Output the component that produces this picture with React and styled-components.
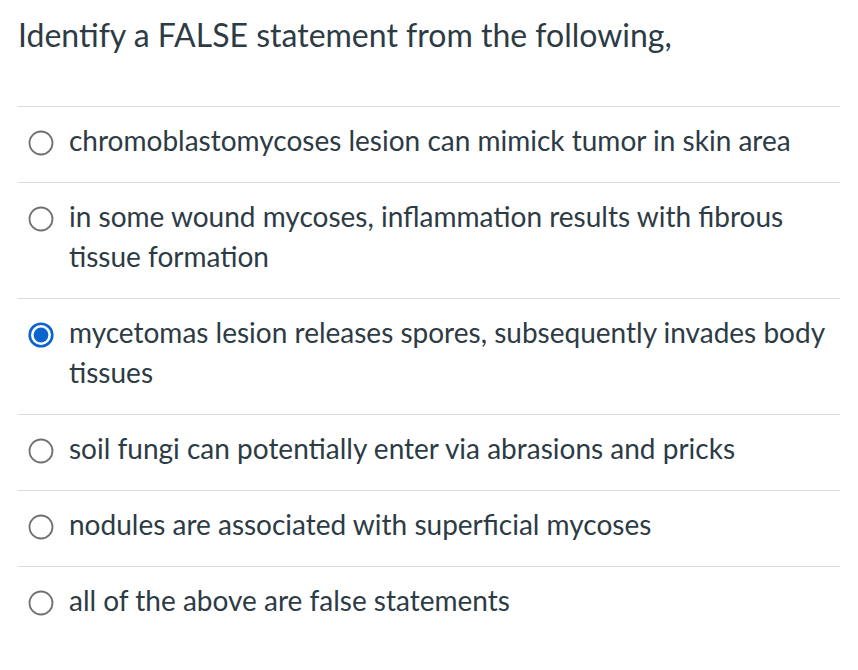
import React from 'react';
import styled, { createGlobalStyle } from 'styled-components';

const Global = createGlobalStyle`
  body {
    margin: 0;
    background: #fff;
    font-family: Lato, "Noto Sans", sans-serif;
    color: #2d3b45;
  }
`;

const Page = styled.div`
  padding: 10px 18px 0 18px;
  width: 822px;
`;

const Question = styled.h1`
  margin: 0;
  font-size: 32px;
  font-weight: 400;
  line-height: 50px;
  padding-bottom: 46px;
`;

const List = styled.div`
  display: flex;
  flex-direction: column;
`;

const Row = styled.label`
  display: flex;
  align-items: flex-start;
  border-top: 1px solid #dcdcdc;
  padding: 13px 0 22px 0;
`;

const RadioWrap = styled.span`
  flex: 0 0 auto;
  box-sizing: border-box;
  width: 51px;
  height: 40px;
  padding: 10px 0 0 10px;
  display: flex;
  align-items: flex-start;
`;

const Text = styled.span`
  font-size: 28px;
  line-height: 40px;
`;

const Radio = ({ checked }) => (
  <RadioWrap>
    <svg width="26" height="26" viewBox="0 0 26 26">
      {checked ? (
        <>
          <circle cx="13" cy="13" r="11.3" fill="#fff" stroke="#0b63ce" strokeWidth="2.6" />
          <circle cx="13" cy="13" r="7.4" fill="#0b63ce" />
        </>
      ) : (
        <circle cx="13" cy="13" r="11.5" fill="#fff" stroke="#707070" strokeWidth="1.8" />
      )}
    </svg>
  </RadioWrap>
);

const options = [
  { text: 'chromoblastomycoses lesion can mimick tumor in skin area' },
  { text: 'in some wound mycoses, inflammation results with fibrous tissue formation' },
  { text: 'mycetomas lesion releases spores, subsequently invades body tissues', checked: true },
  { text: 'soil fungi can potentially enter via abrasions and pricks' },
  { text: 'nodules are associated with superficial mycoses' },
  { text: 'all of the above are false statements' },
];

export default function App() {
  return (
    <Page>
      <Global />
      <Question>Identify a FALSE statement from the following,</Question>
      <List>
        {options.map(o => (
          <Row key={o.text}>
            <Radio checked={o.checked} />
            <Text>{o.text}</Text>
          </Row>
        ))}
      </List>
    </Page>
  );
}
